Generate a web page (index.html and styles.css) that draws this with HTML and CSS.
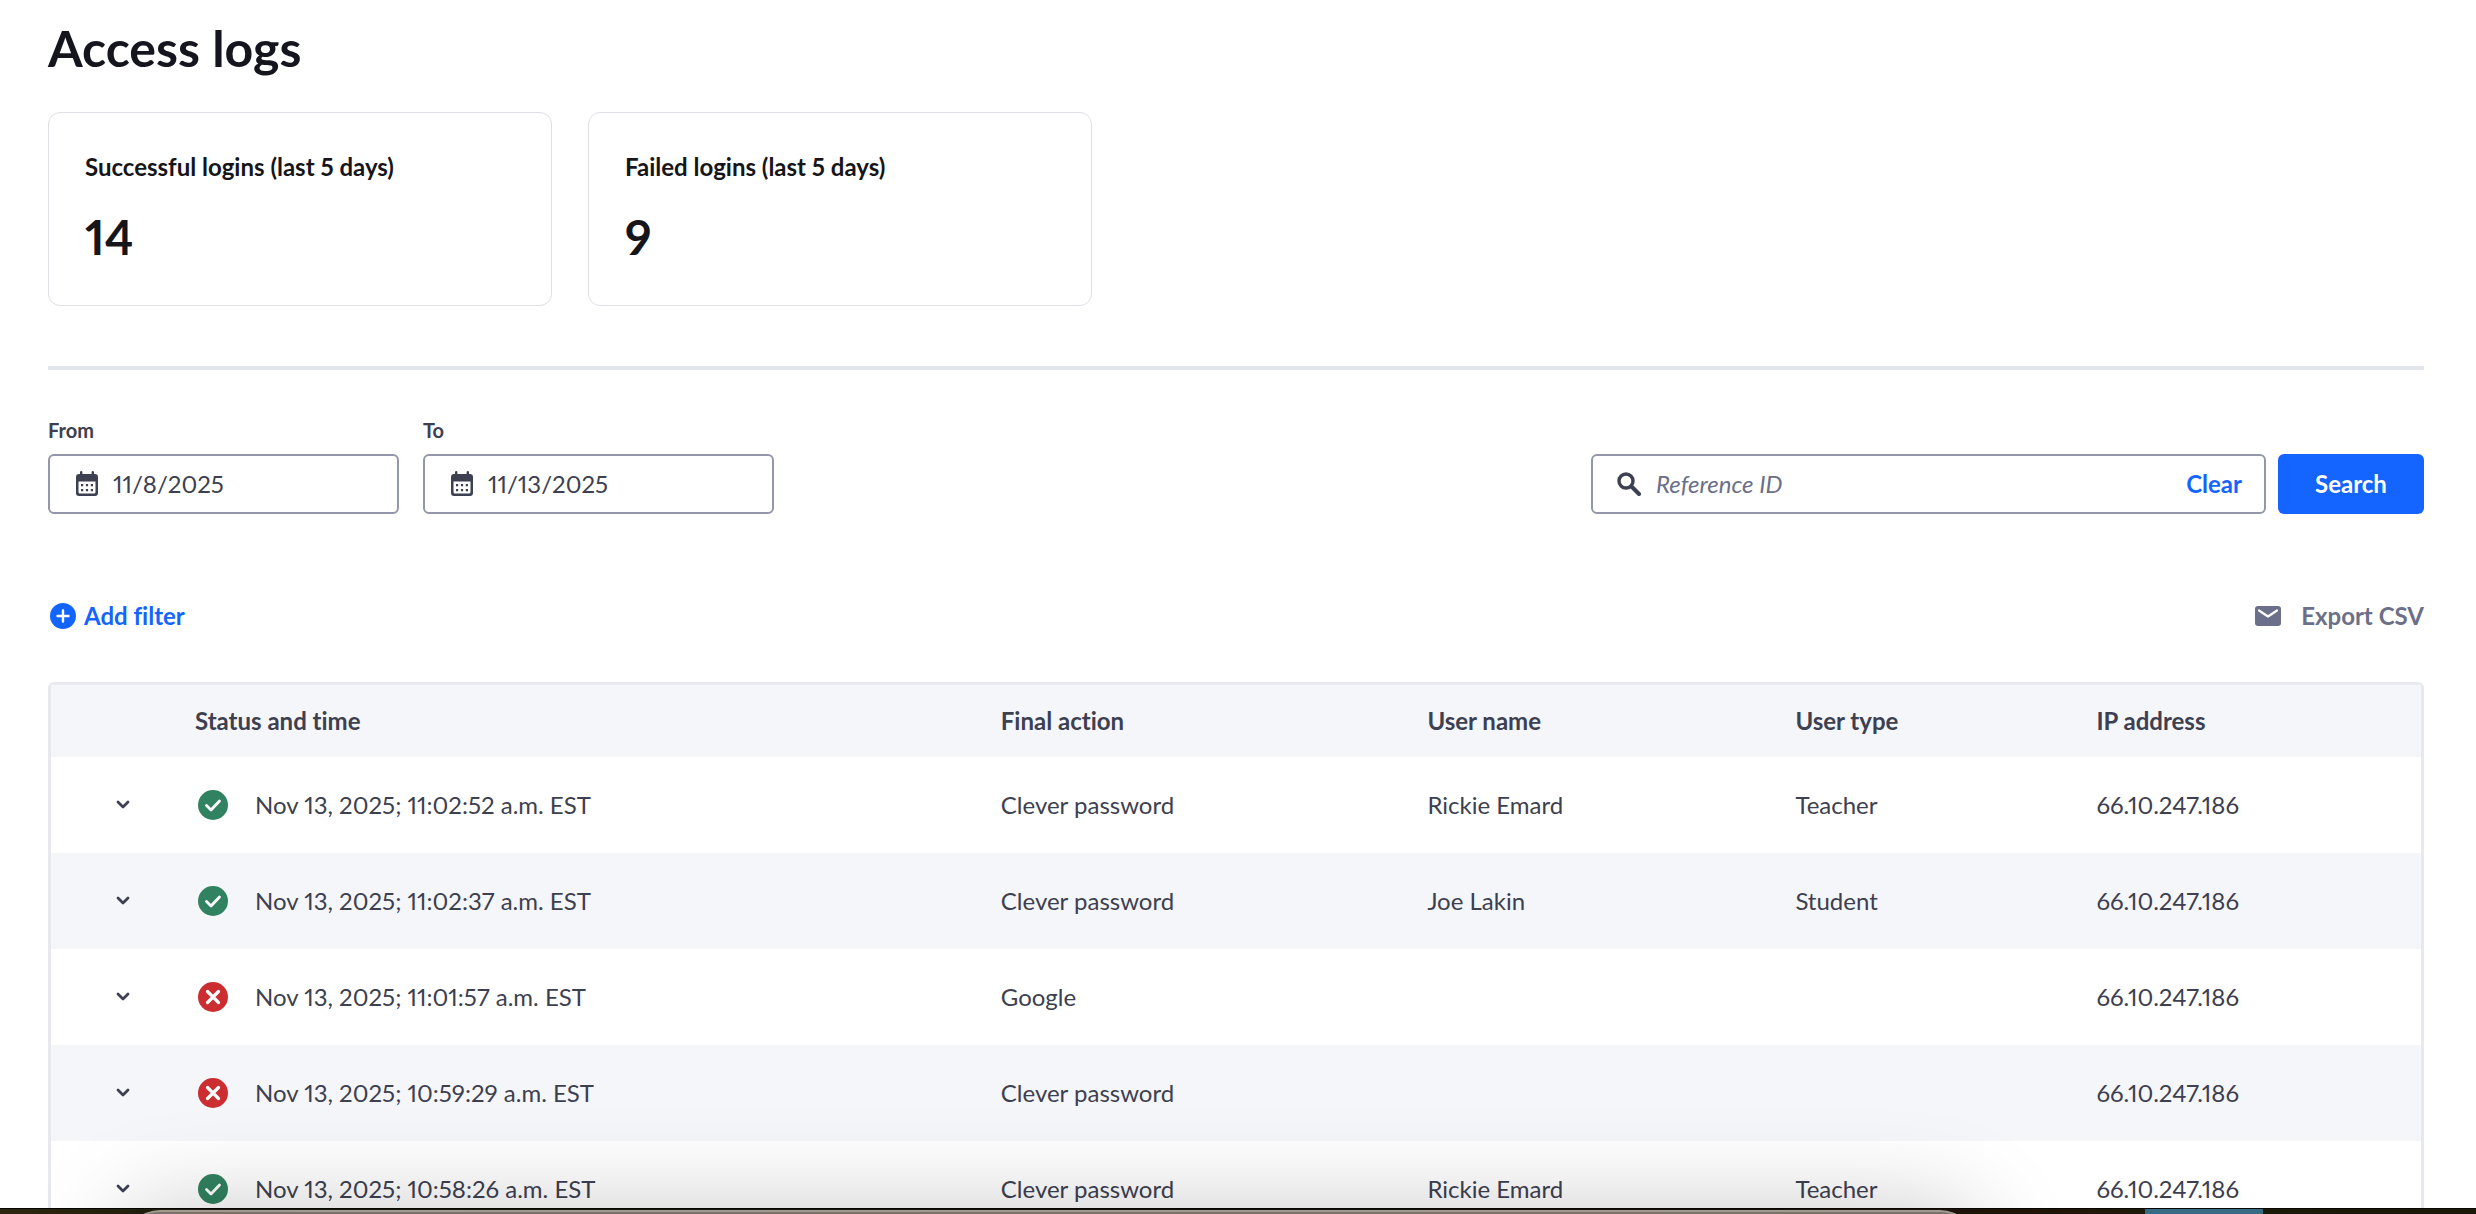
FILE: index.html
```html
<!DOCTYPE html>
<html lang="en">
<head>
<meta charset="utf-8">
<meta name="viewport" content="width=device-width, initial-scale=1">
<title>Access logs</title>
<link rel="stylesheet" href="styles.css">
</head>
<body>
<svg class="sprite" aria-hidden="true">
  <symbol id="calendar" viewBox="0 0 22 26"><path fill-rule="evenodd" d="M4 1.2a1.2 1.2 0 0 1 2.4 0V3h9.2V1.200a1.200 1.200 0 0 1 2.400 0V3h1a3 3 0 0 1 3 3v16a3 3 0 0 1-3 3H3a3 3 0 0 1-3-3V6a3 3 0 0 1 3-3h1zM2.500 10.500V21a1.500 1.500 0 0 0 1.500 1.500h14a1.500 1.500 0 0 0 1.500-1.500V10.500z"/><path d="M5 13h2.200v2.200H5zM9.900 13h2.200v2.200H9.900zM14.800 13H17v2.200h-2.200zM5 18h2.200v2.200H5zM9.900 18h2.200v2.200H9.900zM14.800 18H17v2.200h-2.200z"/></symbol>
  <symbol id="search" viewBox="0 0 24 24"><circle cx="9" cy="9" r="7" fill="none" stroke="currentColor" stroke-width="3.400"/><path d="M14.500 14.500l7.500 7.500" stroke="currentColor" stroke-width="4" stroke-linecap="round"/></symbol>
  <symbol id="plus" viewBox="0 0 26 26"><circle cx="13" cy="13" r="13"/><path d="M13 7.500v11M7.500 13h11" stroke="#fff" stroke-width="2.400" stroke-linecap="round"/></symbol>
  <symbol id="mail" viewBox="0 0 26 20"><rect width="26" height="20" rx="3"/><path d="M4 4.500l9 6 9-6" fill="none" stroke="#fff" stroke-width="2.200" stroke-linecap="round" stroke-linejoin="round"/></symbol>
  <symbol id="chevron" viewBox="0 0 14 10"><path d="M2 2l5 5 5-5" fill="none" stroke="currentColor" stroke-width="2.800" stroke-linecap="round" stroke-linejoin="round"/></symbol>
  <symbol id="ok" viewBox="0 0 30 30"><circle cx="15" cy="15" r="15" fill="#318260"/><path d="M8.500 15.500l4.500 4.500 8.500-9" fill="none" stroke="#fff" stroke-width="2.800" stroke-linecap="round" stroke-linejoin="round"/></symbol>
  <symbol id="fail" viewBox="0 0 30 30"><circle cx="15" cy="15" r="15" fill="#cb2d30"/><path d="M9.500 9.500l11 11M20.500 9.500l-11 11" stroke="#fff" stroke-width="3.200" stroke-linecap="round"/></symbol>
</svg>
<main class="page">
  <h1 class="title">Access logs</h1>
  <section class="stats">
    <article class="stat"><h2 class="stat-label">Successful logins (last 5 days)</h2><p class="stat-value">14</p></article>
    <article class="stat"><h2 class="stat-label">Failed logins (last 5 days)</h2><p class="stat-value">9</p></article>
  </section>
  <hr class="divider">
  <form class="filters">
    <div class="field">
      <label class="field-label" for="from">From</label>
      <div class="box date"><svg class="icon-calendar"><use href="#calendar"/></svg><input class="input" id="from" type="text" value="11/8/2025"></div>
    </div>
    <div class="field">
      <label class="field-label" for="to">To</label>
      <div class="box date"><svg class="icon-calendar"><use href="#calendar"/></svg><input class="input" id="to" type="text" value="11/13/2025"></div>
    </div>
    <div class="lookup">
      <div class="box reference"><svg class="icon-search"><use href="#search"/></svg><input class="input" type="text" placeholder="Reference ID" aria-label="Reference ID"><button class="clear" type="button">Clear</button></div>
      <button class="submit" type="button">Search</button>
    </div>
  </form>
  <div class="actions">
    <button class="action add" type="button"><svg class="icon-plus"><use href="#plus"/></svg>Add filter</button>
    <button class="action export" type="button"><svg class="icon-mail"><use href="#mail"/></svg>Export CSV</button>
  </div>
  <div class="table-wrap">
    <table class="logs">
      <colgroup><col class="c-toggle"><col class="c-time"><col class="c-action"><col class="c-name"><col class="c-type"><col class="c-ip"></colgroup>
      <thead><tr><td></td><th scope="col">Status and time</th><th scope="col">Final action</th><th scope="col">User name</th><th scope="col">User type</th><th scope="col">IP address</th></tr></thead>
      <tbody>
        <tr><td><button class="toggle" type="button" aria-label="Expand"><svg class="icon-chevron"><use href="#chevron"/></svg></button></td><td><div class="time"><svg class="icon-status"><use href="#ok"/></svg>Nov 13, 2025; 11:02:52 a.m. EST</div></td><td>Clever password</td><td>Rickie Emard</td><td>Teacher</td><td>66.10.247.186</td></tr>
        <tr><td><button class="toggle" type="button" aria-label="Expand"><svg class="icon-chevron"><use href="#chevron"/></svg></button></td><td><div class="time"><svg class="icon-status"><use href="#ok"/></svg>Nov 13, 2025; 11:02:37 a.m. EST</div></td><td>Clever password</td><td>Joe Lakin</td><td>Student</td><td>66.10.247.186</td></tr>
        <tr><td><button class="toggle" type="button" aria-label="Expand"><svg class="icon-chevron"><use href="#chevron"/></svg></button></td><td><div class="time"><svg class="icon-status"><use href="#fail"/></svg>Nov 13, 2025; 11:01:57 a.m. EST</div></td><td>Google</td><td></td><td></td><td>66.10.247.186</td></tr>
        <tr><td><button class="toggle" type="button" aria-label="Expand"><svg class="icon-chevron"><use href="#chevron"/></svg></button></td><td><div class="time"><svg class="icon-status"><use href="#fail"/></svg>Nov 13, 2025; 10:59:29 a.m. EST</div></td><td>Clever password</td><td></td><td></td><td>66.10.247.186</td></tr>
        <tr><td><button class="toggle" type="button" aria-label="Expand"><svg class="icon-chevron"><use href="#chevron"/></svg></button></td><td><div class="time"><svg class="icon-status"><use href="#ok"/></svg>Nov 13, 2025; 10:58:26 a.m. EST</div></td><td>Clever password</td><td>Rickie Emard</td><td>Teacher</td><td>66.10.247.186</td></tr>
      </tbody>
    </table>
  </div>
</main>
<div class="desktop" aria-hidden="true"><div class="tile"></div><div class="dock"></div></div>
</body>
</html>
```
FILE: styles.css
```css
* { box-sizing: border-box; }
body {
  margin: 0;
  height: 100vh;
  overflow: hidden;
  display: flex;
  flex-direction: column;
  background: #fff;
  color: #3d4050;
  font: 24px/32px Lato, "Open Sans", sans-serif;
  font-variant-numeric: proportional-nums;
  font-variant-ligatures: none;
}
button, input { font: inherit; color: inherit; font-variant-numeric: proportional-nums; font-variant-ligatures: none; }
button { border: 0; padding: 0; background: none; cursor: pointer; }
svg { flex: none; fill: currentColor; }
.sprite { position: absolute; width: 0; height: 0; }

.page { flex: 1; min-height: 0; overflow: hidden; padding: 20px 52px 0 48px; }
.title { margin: 0; font-size: 50px; line-height: 56px; font-weight: 700; color: #15151e; }

.stats { display: flex; gap: 36px; margin-top: 36px; }
.stat { width: 504px; padding: 36px 36px 32px; border: 1px solid #dfdfe5; border-radius: 12px; color: #15151a; }
.stat-label { margin: 0; font-size: 24px; line-height: 36px; font-weight: 700; }
.stat-value { margin: 24px 0 8px; font-size: 48px; line-height: 56px; font-weight: 700; }

.divider { height: 4px; margin: 60px 0 44px; border: 0; background: #e3e6ea; }

.filters { display: flex; align-items: flex-end; gap: 24px; }
.field { width: 351px; }
.field-label { display: block; margin-bottom: 8px; font-size: 20px; line-height: 32px; font-weight: 700; }
.box { display: flex; align-items: center; height: 60px; border: 2px solid #9497a9; border-radius: 6px; background: #fff; }
.date { padding: 0 24px 0 26px; gap: 15px; }
.input { flex: 1; min-width: 0; border: 0; padding: 0; outline: 0; background: none; }
.input::placeholder { color: #6b6f8a; opacity: 1; font-style: italic; }
.lookup { display: flex; gap: 12px; margin-left: auto; }
.reference { width: 675px; padding: 0 22px 0 24px; gap: 15px; }
.clear { color: #1464ff; font-weight: 700; }
.submit { width: 146px; height: 60px; border-radius: 6px; background: #1464ff; color: #fff; font-weight: 700; }

.actions { display: flex; justify-content: space-between; margin: 86px 0 50px; }
.action { display: flex; align-items: center; font-weight: 700; }
.add { gap: 8px; padding-left: 2px; color: #1464ff; }
.export { gap: 20px; color: #6b6f8a; }

.table-wrap { border: 3px solid #e8e9ef; border-radius: 6px; }
.logs { width: 100%; border-collapse: collapse; table-layout: fixed; }
.logs th, .logs td { padding: 0; text-align: left; }
.logs thead { background: #f5f6fa; }
.logs thead tr { height: 72px; }
.logs tbody tr { height: 96px; }
.logs tbody tr:nth-child(even) { background: #f5f6fa; }
.c-toggle { width: 144px; }
.c-time { width: 34%; }
.c-action { width: 18%; }
.c-name { width: 368px; }
.c-type { width: 301px; }
.toggle { display: flex; width: 144px; height: 32px; align-items: center; justify-content: center; }
.time { display: flex; align-items: center; gap: 27px; padding-left: 3px; }

.icon-calendar { width: 22px; height: 26px; }
.icon-search { width: 24px; height: 24px; }
.icon-plus { width: 26px; height: 26px; }
.icon-mail { width: 26px; height: 20px; }
.icon-chevron { width: 14px; height: 10px; }
.icon-status { width: 30px; height: 30px; }

.desktop {
  position: relative;
  flex: none;
  height: 6px;
  border-top: 1px solid #080704;
  background: linear-gradient(90deg, #2b2710, #1f1c0b 10%, #14140d 50%, #221409 82%, #1c1c08 88%, #1a1809);
}
.tile { position: absolute; left: 2145px; top: 0; width: 118px; height: 5px; background: #386c84; }
.dock {
  position: absolute;
  left: 124px;
  right: 500px;
  top: 1px;
  height: 150px;
  border-radius: 36px;
  border-top: 2px solid #a09a90;
  background: #78726a;
  box-shadow: 0 0 100px rgba(0, 0, 0, .22);
}
```
